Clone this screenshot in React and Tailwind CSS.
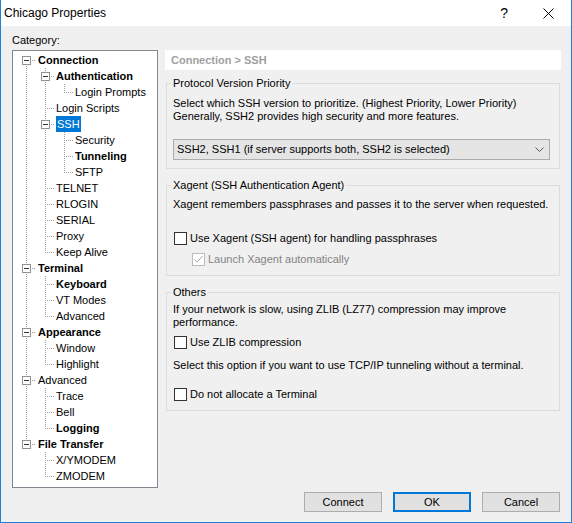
import React from "react";

const tree = [
  {
    label: "Connection",
    bold: true,
    children: [
      { label: "Authentication", bold: true, children: [{ label: "Login Prompts" }] },
      { label: "Login Scripts" },
      {
        label: "SSH",
        selected: true,
        children: [{ label: "Security" }, { label: "Tunneling", bold: true }, { label: "SFTP" }],
      },
      { label: "TELNET" },
      { label: "RLOGIN" },
      { label: "SERIAL" },
      { label: "Proxy" },
      { label: "Keep Alive" },
    ],
  },
  {
    label: "Terminal",
    bold: true,
    children: [{ label: "Keyboard", bold: true }, { label: "VT Modes" }, { label: "Advanced" }],
  },
  { label: "Appearance", bold: true, children: [{ label: "Window" }, { label: "Highlight" }] },
  {
    label: "Advanced",
    children: [{ label: "Trace" }, { label: "Bell" }, { label: "Logging", bold: true }],
  },
  { label: "File Transfer", bold: true, children: [{ label: "X/YMODEM" }, { label: "ZMODEM" }] },
];

function flatten(nodes, level, guides, out) {
  nodes.forEach((n, i) => {
    const last = i === nodes.length - 1;
    const first = level === 0 && i === 0;
    out.push({ ...n, level, guides, last, first });
    if (n.children) flatten(n.children, level + 1, [...guides, !last], out);
  });
  return out;
}

const rows = flatten(tree, 0, [], []);
const LINE = "#a0a0a0";

function Guide({ on }) {
  return (
    <svg width="19" height="16" className="shrink-0 block">
      {on && <line x1="9.5" y1="0" x2="9.5" y2="16" stroke={LINE} strokeDasharray="1 1" />}
    </svg>
  );
}

function Connector({ first, last, expander }) {
  return (
    <svg width="19" height="16" className="shrink-0 block">
      <line
        x1="9.5"
        y1={first ? 8 : 0}
        x2="9.5"
        y2={last ? 9 : 16}
        stroke={LINE}
        strokeDasharray="1 1"
      />
      <line x1={expander ? 15 : 11} y1="8.5" x2="19" y2="8.5" stroke={LINE} strokeDasharray="1 1" />
      {expander && (
        <g>
          <rect x="5.5" y="4.5" width="8" height="8" fill="#ffffff" stroke="#919191" />
          <line x1="7" y1="8.5" x2="12" y2="8.5" stroke="#333333" />
        </g>
      )}
    </svg>
  );
}

function Tree() {
  return (
    <div className="h-[438px] w-[146px] border border-[#828790] bg-white pt-[1px] pl-[4px]">
      {rows.map((r, idx) => (
        <div key={idx} className="flex h-[16px] items-center">
          {r.guides.map((g, k) => (
            <Guide key={k} on={g} />
          ))}
          <Connector first={r.first} last={r.last} expander={!!r.children} />
          <span
            className={`leading-[16px] whitespace-nowrap ${r.level === 0 ? "ml-[2px]" : "ml-[1px]"} ${
              r.bold ? "font-bold" : ""
            } ${r.selected ? "bg-[#0078d7] text-white px-[1px]" : "text-black"}`}
          >
            {r.label}
          </span>
        </div>
      ))}
    </div>
  );
}

function Check({ checked, disabled }) {
  return (
    <span
      className={`flex h-[13px] w-[13px] shrink-0 items-center justify-center border bg-white ${
        disabled ? "border-[#bcbcbc]" : "border-[#333333]"
      }`}
    >
      {checked && (
        <svg width="11" height="11" viewBox="0 0 11 11">
          <path d="M1.5 5.5 L4.2 8.2 L9.5 2" fill="none" stroke={disabled ? "#a8a8a8" : "#000"} strokeWidth="1" />
        </svg>
      )}
    </span>
  );
}

function Group({ title, className, children }) {
  return (
    <fieldset className={`mx-[1px] border border-[#dcdcdc] pl-[6px] ${className}`}>
      <legend className="-ml-[2px] px-[2px] leading-[14px]">{title}</legend>
      {children}
    </fieldset>
  );
}

function Button({ children, def }) {
  return (
    <div
      className={`flex h-[20px] w-[78px] items-center justify-center bg-[#e1e1e1] ${
        def ? "border border-[#0078d7] shadow-[inset_0_0_0_1px_#0078d7]" : "border border-[#adadad]"
      }`}
    >
      {children}
    </div>
  );
}

export default function App() {
  return (
    <div className="flex h-[523px] w-[572px] flex-col border-x border-b border-[#1883d7] bg-[#f0f0f0] font-['Liberation_Sans',Arial,sans-serif] text-[11px] text-black">
      <div className="flex h-[26px] shrink-0 items-center bg-white pl-[3px]">
        <span className="text-[12px]">Chicago Properties</span>
        <span className="ml-auto mr-[35px] text-[14px] font-light leading-none">?</span>
        <svg width="11" height="11" viewBox="0 0 11 11" className="mr-[17px]">
          <path d="M0.5 0.5 L10.5 10.5 M10.5 0.5 L0.5 10.5" stroke="#000" strokeWidth="1" />
        </svg>
      </div>

      <div className="flex flex-1 pl-[11px] pr-[10px] pt-[7px]">
        <div className="flex w-[146px] flex-col">
          <div className="h-[17px] leading-[14px]">Category:</div>
          <Tree />
        </div>

        <div className="ml-[7px] mt-[17px] flex w-[396px] flex-col">
          <div className="flex h-[20px] items-center bg-white pl-[6px] font-bold text-[#a0a0a0]">
            Connection &gt; SSH
          </div>

          <Group title="Protocol Version Priority" className="mt-[6px] pb-[8px]">
            <div className="mt-[7px] leading-[13px]">
              <div>Select which SSH version to prioritize. (Highest Priority, Lower Priority)</div>
              <div>Generally, SSH2 provides high security and more features.</div>
            </div>
            <div className="mt-[16px] flex h-[21px] w-[377px] items-center border border-[#acacac] bg-[#e5e5e5] pl-[3px] pr-[5px]">
              <span>SSH2, SSH1 (if server supports both, SSH2 is selected)</span>
              <svg width="9" height="6" viewBox="0 0 9 6" className="ml-auto">
                <path d="M0.5 0.5 L4.5 4.5 L8.5 0.5" fill="none" stroke="#555" strokeWidth="1" />
              </svg>
            </div>
          </Group>

          <Group title="Xagent (SSH Authentication Agent)" className="mt-[9px] pb-[9px]">
            <div className="mt-[6px] leading-[13px]">
              Xagent remembers passphrases and passes it to the server when requested.
            </div>
            <div className="mt-[21px] flex items-center gap-[3px] pl-[1px]">
              <Check />
              <span className="leading-[13px]">Use Xagent (SSH agent) for handling passphrases</span>
            </div>
            <div className="mt-[8px] flex items-center gap-[3px] pl-[19px] text-[#838383]">
              <Check checked disabled />
              <span className="leading-[13px]">Launch Xagent automatically</span>
            </div>
          </Group>

          <Group title="Others" className="mt-[9px] pb-[9px]">
            <div className="mt-[4px] leading-[13px]">
              <div>If your network is slow, using ZLIB (LZ77) compression may improve</div>
              <div>performance.</div>
            </div>
            <div className="mt-[7px] flex items-center gap-[3px] pl-[1px]">
              <Check />
              <span className="leading-[13px]">Use ZLIB compression</span>
            </div>
            <div className="mt-[10px] leading-[13px]">
              Select this option if you want to use TCP/IP tunneling without a terminal.
            </div>
            <div className="mt-[16px] flex items-center gap-[3px] pl-[1px]">
              <Check />
              <span className="leading-[13px]">Do not allocate a Terminal</span>
            </div>
          </Group>
        </div>
      </div>

      <div className="flex shrink-0 justify-end gap-[11px] pb-[10px] pr-[11px]">
        <Button>Connect</Button>
        <Button def>OK</Button>
        <Button>Cancel</Button>
      </div>
    </div>
  );
}
